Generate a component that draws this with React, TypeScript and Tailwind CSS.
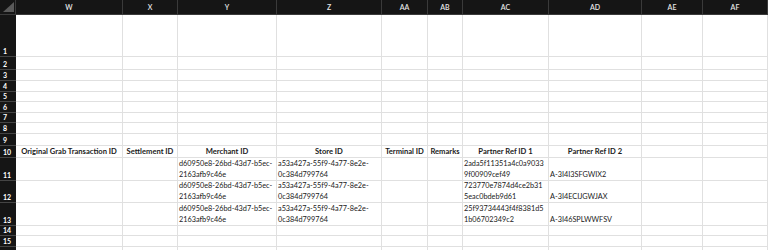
const columns = ["W", "X", "Y", "Z", "AA", "AB", "AC", "AD", "AE", "AF"];

// row heights for rows 1..16 (last one is cut off by the window)
const rowHeights = [
  "h-[42px]",
  "h-[13px]",
  "h-[11px]",
  "h-[11px]",
  "h-[10px]",
  "h-[11px]",
  "h-[10px]",
  "h-[11px]",
  "h-[12px]",
  "h-[12px]",
  "h-[23px]",
  "h-[22px]",
  "h-[23px]",
  "h-[10px]",
  "h-[11px]",
  "h-[12px]"
];

const headers: Record<string, string> = {
  W: "Original Grab Transaction ID",
  X: "Settlement ID",
  Y: "Merchant ID",
  Z: "Store ID",
  AA: "Terminal ID",
  AB: "Remarks",
  AC: "Partner Ref ID 1",
  AD: "Partner Ref ID 2"
};

type Cell = string[];
const data: Record<number, Record<string, Cell>> = {
  11: {
    Y: ["d60950e8-26bd-43d7-b5ec-", "2163afb9c46e"],
    Z: ["a53a427a-55f9-4a77-8e2e-", "0c384d799764"],
    AC: ["2ada5f11351a4c0a9033", "9f00909cef49"],
    AD: ["A-3I4I3SFGWIX2"]
  },
  12: {
    Y: ["d60950e8-26bd-43d7-b5ec-", "2163afb9c46e"],
    Z: ["a53a427a-55f9-4a77-8e2e-", "0c384d799764"],
    AC: ["723770e7874d4ce2b31", "5eac0bdeb9d61"],
    AD: ["A-3I4ECIJGWJAX"]
  },
  13: {
    Y: ["d60950e8-26bd-43d7-b5ec-", "2163afb9c46e"],
    Z: ["a53a427a-55f9-4a77-8e2e-", "0c384d799764"],
    AC: ["25f93734443f4f8381d5", "1b06702349c2"],
    AD: ["A-3I46SPLWWFSV"]
  }
};

function CornerCell() {
  return (
    <div className="h-[15px] bg-[#151515] border-r border-b border-[#3a3a3a] flex items-end justify-end pr-[1px] pb-[2px]">
      <svg width="11" height="10" viewBox="0 0 11 10">
        <polygon points="11,0 11,10 0,10" fill="#5a5a5a" />
      </svg>
    </div>
  );
}

export default function App() {
  return (
    <div
      className="w-[768px] h-[250px] overflow-hidden bg-white"
      style={{ fontFamily: "Lato, 'Open Sans', sans-serif" }}
    >
      <div className="grid grid-cols-[16px_107px_55px_99px_105px_46px_35px_86px_93px_61px_65px]">
        <CornerCell />
        {columns.map((c) => (
          <div
            key={c}
            className="h-[15px] bg-[#151515] border-r border-b border-[#3a3a3a] flex items-center justify-center text-[7px] font-semibold text-[#e6e6e6]"
          >
            {c}
          </div>
        ))}

        {rowHeights.map((h, i) => {
          const row = i + 1;
          return [
            <div
              key={`n${row}`}
              className={`${h} bg-[#151515] border-b border-[#444] flex items-end pl-[3px] pb-[1px] text-[7px] font-bold leading-none text-white`}
            >
              {row < 16 ? row : null}
            </div>,
            ...columns.map((c) => {
              const cell = data[row]?.[c];
              const isHeader = row === 10 && headers[c];
              return (
                <div
                  key={`${row}${c}`}
                  className={`${h} border-r border-b border-[#e0e0e0] flex flex-col justify-end overflow-hidden whitespace-nowrap leading-[11px] text-[#1a1a1a] ${
                    isHeader
                      ? "items-center font-bold text-[7.6px]"
                      : "pl-[1px] text-[7.3px]"
                  }`}
                >
                  {isHeader && <span>{headers[c]}</span>}
                  {cell &&
                    cell.map((line, k) => <span key={k}>{line}</span>)}
                </div>
              );
            })
          ];
        })}
      </div>
    </div>
  );
}
